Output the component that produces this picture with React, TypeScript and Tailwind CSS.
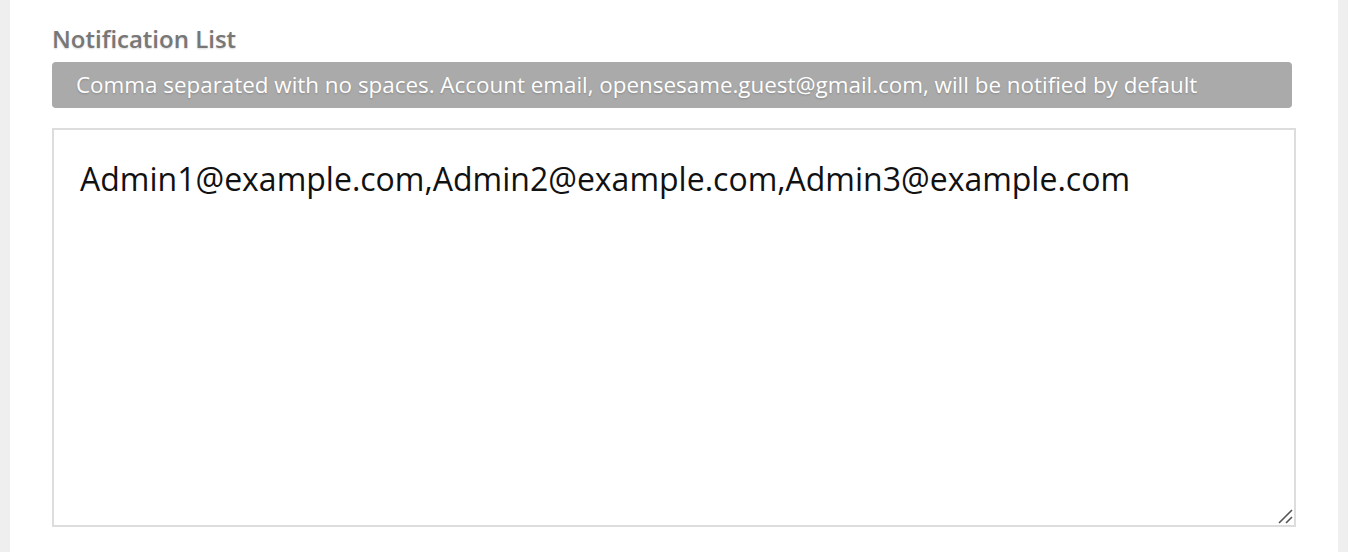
export default function App() {
  return (
    <div className="flex h-[552px] w-full bg-[#efefef] font-['Open_Sans',sans-serif]">
      <div className="ml-[10px] mr-[10px] flex flex-1 flex-col bg-white pl-[42px] pr-[42px] pt-[24px]">
        <label className="text-[24px] font-semibold leading-[30px] text-[#777777] [text-shadow:0_1px_2px_rgba(0,0,0,0.15)]">
          Notification List
        </label>
        <div className="mt-[8px] mr-[4px] flex h-[46px] items-center rounded-[4px] bg-[#aaaaaa] px-[24px] text-[22.4px] text-white [text-shadow:0_1px_2px_rgba(0,0,0,0.2)]">
          Comma separated with no spaces. Account email, opensesame.guest@gmail.com, will be notified by default
        </div>
        <div className="relative mt-[20px]">
          <textarea
            className="block h-[399px] w-full resize-none border-2 border-[#dddddd] px-[26px] pt-[29px] text-[32px] leading-[40px] text-[#111111] outline-none"
            defaultValue="Admin1@example.com,Admin2@example.com,Admin3@example.com"
          />
          <svg className="pointer-events-none absolute bottom-[3px] right-[3px] h-[16px] w-[16px]" viewBox="0 0 16 16">
            <path d="M2 15 L15 2 M9 15 L15 9" stroke="#555555" strokeWidth="1.6" />
          </svg>
        </div>
      </div>
    </div>
  );
}
